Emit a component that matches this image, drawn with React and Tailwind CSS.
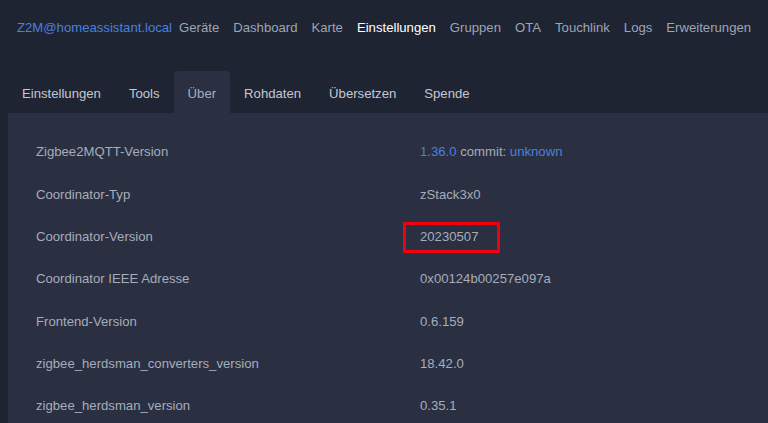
const NAV = ['Geräte', 'Dashboard', 'Karte', 'Einstellungen', 'Gruppen', 'OTA', 'Touchlink', 'Logs', 'Erweiterungen'];
const TABS = ['Einstellungen', 'Tools', 'Über', 'Rohdaten', 'Übersetzen', 'Spende'];

const ROWS = [
  { label: 'Zigbee2MQTT-Version', value: 'version' },
  { label: 'Coordinator-Typ', value: 'zStack3x0' },
  { label: 'Coordinator-Version', value: '20230507', marked: true },
  { label: 'Coordinator IEEE Adresse', value: '0x00124b00257e097a' },
  { label: 'Frontend-Version', value: '0.6.159' },
  { label: 'zigbee_herdsman_converters_version', value: '18.42.0' },
  { label: 'zigbee_herdsman_version', value: '0.35.1' },
];

function Value({ row }) {
  if (row.value === 'version') {
    return (
      <span>
        <span className="text-[#4a80dc]">1.36.0</span> commit: <span className="text-[#4a80dc]">unknown</span>
      </span>
    );
  }
  if (row.marked) {
    return (
      <span className="relative">
        {row.value}
        <span className="absolute left-[-17px] top-[-5px] w-[97px] h-[31px] border-[3px] border-[#f20010]" />
      </span>
    );
  }
  return <span>{row.value}</span>;
}

export default function App() {
  return (
    <div
      className="w-[768px] h-[423px] overflow-hidden bg-[#1f2433] text-[13.15px] text-[#a6adba]"
      style={{ fontFamily: '"Liberation Sans", Arial, sans-serif' }}
    >
      <nav className="h-[56px] flex items-center pl-[17px]">
        <span className="text-[#4a80dc]">Z2M@homeassistant.local</span>
        {NAV.map((item) => (
          <span
            key={item}
            className={`px-[7px] whitespace-nowrap ${item === 'Einstellungen' ? 'text-white' : 'text-[#9ea5b3]'}`}
          >
            {item}
          </span>
        ))}
      </nav>

      <div className="mt-[15px] ml-2 h-[42px] flex">
        {TABS.map((tab) => (
          <div
            key={tab}
            className={`px-[14px] pt-[3px] flex items-center rounded-t-[4px] ${tab === 'Über' ? 'bg-[#2a3042] text-[#a6adba]' : 'text-[#c3c8d2]'}`}
          >
            {tab}
          </div>
        ))}
      </div>

      <div className="ml-2 h-[310px] bg-[#2a3042] pt-[18px] pl-[28px]">
        {ROWS.map((row) => (
          <div key={row.label} className="h-[42.33px] grid grid-cols-[384px_1fr] items-center">
            <span>{row.label}</span>
            <Value row={row} />
          </div>
        ))}
      </div>
    </div>
  );
}
